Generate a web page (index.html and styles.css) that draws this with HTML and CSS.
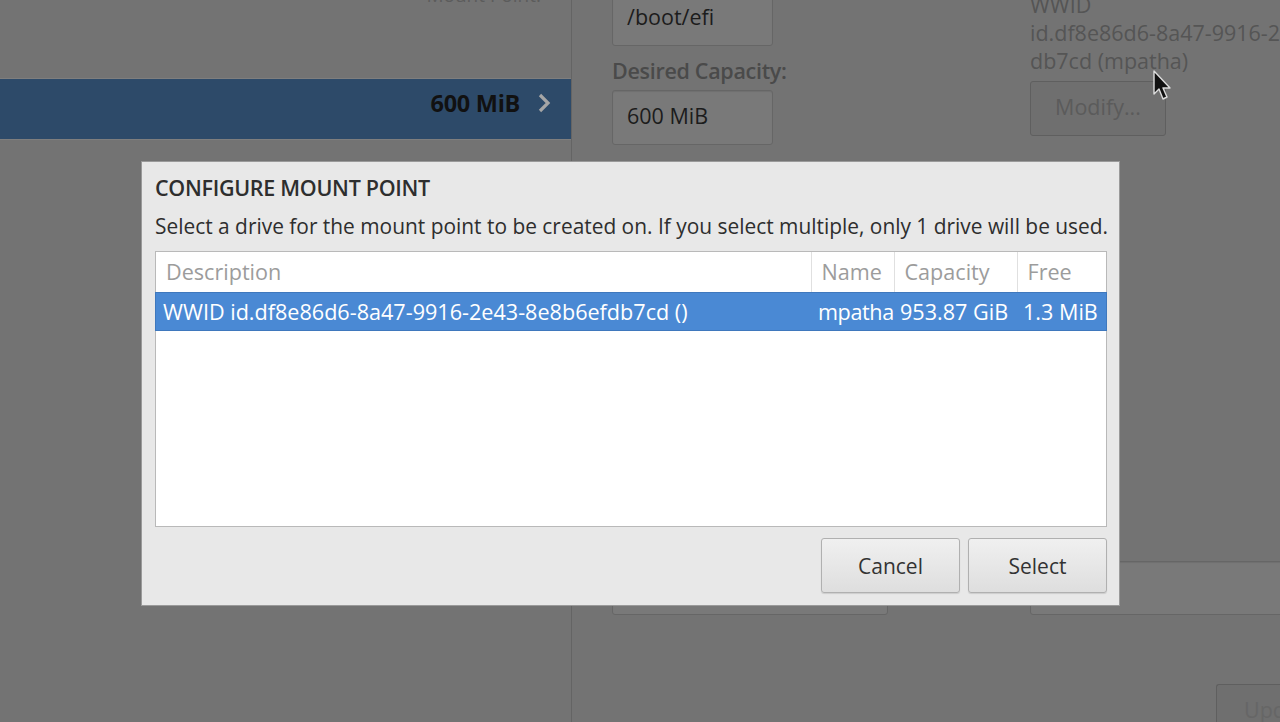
FILE: index.html
```html
<!DOCTYPE html>
<html lang="en">
<head>
<meta charset="utf-8">
<title>Configure Mount Point</title>
<link rel="stylesheet" href="styles.css">
</head>
<body>
<div class="app">
  <div class="left">
    <div class="top-cut">Mount Point:</div>
    <div class="part-row selected">
      <span class="size">600 MiB</span>
      <svg class="chev" width="14" height="22" viewBox="0 0 14 22"><path d="M3 3 L11 11 L3 19" fill="none" stroke="#a6a6a6" stroke-width="3.2"/></svg>
    </div>
  </div>
  <div class="right">
    <div class="cols">
      <div class="col1">
        <div class="field first">/boot/efi</div>
        <div class="label">Desired Capacity:</div>
        <div class="field">600 MiB</div>
      </div>
      <div class="col2">
        <div class="dev">WWID<br>id.df8e86d6-8a47-9916-2e43-8e8b6efdb7cd<br>db7cd (mpatha)</div>
        <div class="btn-dim">Modify...</div>
      </div>
    </div>
    <div class="bottom-fields">
      <div class="field wide"></div>
      <div class="field wide2"></div>
    </div>
    <div class="update-row"><div class="btn-dim upd">Update Settings</div></div>
  </div>
</div>

<svg class="cursor" width="22" height="32" viewBox="0 0 22 32"><path d="M1 1 L1 24 L6 19 L10 29 L14 27 L10 18 L17 18 Z" fill="#111" stroke="#ddd" stroke-width="1.4" stroke-linejoin="round"/></svg>

<div class="dialog">
  <div class="title">CONFIGURE MOUNT POINT</div>
  <div class="subtitle">Select a drive for the mount point to be created on. If you select multiple, only 1 drive will be used.</div>
  <div class="table-wrap">
    <table class="drives">
      <colgroup>
        <col class="c-desc"><col class="c-name"><col class="c-cap"><col class="c-free">
      </colgroup>
      <thead>
        <tr><th>Description</th><th>Name</th><th>Capacity</th><th class="last">Free</th></tr>
      </thead>
      <tbody>
        <tr class="sel"><td>WWID id.df8e86d6-8a47-9916-2e43-8e8b6efdb7cd ()</td><td>mpatha</td><td>953.87 GiB</td><td>1.3 MiB</td></tr>
      </tbody>
    </table>
  </div>
  <div class="actions">
    <button class="btn">Cancel</button>
    <button class="btn">Select</button>
  </div>
</div>
</body>
</html>
```

FILE: styles.css
```css
* { box-sizing: border-box; }
html, body {
  margin: 0;
  padding: 0;
  width: 1280px;
  height: 722px;
  overflow: hidden;
  background: #737373;
  font-family: "Open Sans", "Noto Sans", sans-serif;
}
.app {
  display: flex;
  height: 722px;
}
.left {
  width: 572px;
  flex: none;
  border-right: 1px solid #646464;
  display: flex;
  flex-direction: column;
}
.top-cut {
  height: 92px;
  margin-top: -14px;
  text-align: right;
  padding-right: 30px;
  color: #5c5c5c;
  font-size: 19px;
  line-height: 18px;
}
.part-row {
  height: 62px;
  border-top: 1px solid #7e7e7e;
  border-bottom: 1px solid #7e7e7e;
  display: flex;
  align-items: center;
  justify-content: flex-end;
  padding-right: 20px;
  padding-bottom: 12px;
  gap: 17px;
}
.part-row.selected { background: #2d4a69; }
.size {
  color: #111;
  font-size: 23.5px;
  font-weight: 700;
  letter-spacing: -0.3px;
}
.chev { display: block; }

.right {
  flex: 1;
  min-width: 0;
  display: flex;
  flex-direction: column;
  padding-left: 40px;
}
.cols {
  display: flex;
}
.col1 { width: 418px; flex: none; }
.col2 { flex: 1; min-width: 0; }
.field {
  width: 161px;
  height: 55px;
  background: #797979;
  border: 1px solid #666;
  border-radius: 3px;
  box-shadow: inset 0 1px 1px rgba(0,0,0,0.08);
  color: #1c1c1c;
  font-size: 21.5px;
  line-height: 50px;
  padding-left: 14px;
}
.field.first {
  margin-top: -9px;
}
.label {
  margin-top: 12px;
  height: 26px;
  line-height: 26px;
  font-size: 21.5px;
  font-weight: 600;
  color: #4a4a4a;
  letter-spacing: -0.3px;
}
.col1 .label + .field { margin-top: 6px; }
.dev {
  margin-top: -9px;
  color: #555;
  font-size: 21.5px;
  line-height: 28px;
  white-space: nowrap;
  overflow: hidden;
}
.btn-dim {
  margin-top: 6px;
  width: 136px;
  height: 55px;
  border: 1px solid #5f5f5f;
  border-radius: 3px;
  background: #6f6f6f;
  color: #5b5b5b;
  font-size: 21.5px;
  line-height: 50px;
  text-align: center;
}
.bottom-fields {
  display: flex;
  margin-top: 416px;
}
.field.wide { width: 276px; height: 54px; flex: none; }
.field.wide2 { width: 260px; height: 54px; margin-left: 142px; flex: none; }
.update-row {
  display: flex;
  justify-content: flex-end;
  margin-top: 69px;
}
.btn-dim.upd {
  margin-top: 0;
  width: 64px;
  overflow: hidden;
  white-space: nowrap;
  text-align: left;
  padding-left: 27px;
  border-right: none;
  border-radius: 3px 0 0 3px;
  color: #666;
}

.cursor {
  position: absolute;
  left: 1153px;
  top: 70px;
}

.dialog {
  position: absolute;
  left: 141px;
  top: 161px;
  width: 979px;
  height: 445px;
  background: #e8e8e8;
  border: 1px solid #9a9a9a;
  padding: 12px 12px 12px 13px;
  display: flex;
  flex-direction: column;
}
.title {
  height: 28px;
  line-height: 28px;
  font-size: 21.5px;
  font-weight: 600;
  color: #2e2e2e;
  letter-spacing: -0.3px;
}
.subtitle {
  margin-top: 10px;
  height: 28px;
  line-height: 28px;
  font-size: 20.9px;
  color: #2e2e2e;
  white-space: nowrap;
}
.table-wrap {
  margin-top: 11px;
  height: 276px;
  background: #fff;
  border: 1px solid #b9b9b9;
}
.drives {
  width: 100%;
  border-collapse: collapse;
  table-layout: fixed;
  font-size: 21.6px;
}
.c-desc { width: 655px; }
.c-name { width: 83px; }
.c-cap { width: 123px; }
.c-free { width: auto; }
.drives th {
  height: 41px;
  text-align: left;
  font-weight: 400;
  color: #9c9c9c;
  padding: 0 0 3px 10px;
  border-right: 1px solid #e0e0e0;
  white-space: nowrap;
  overflow: hidden;
}
.drives th.last { border-right: none; }
.drives td {
  height: 37px;
  padding: 0 0 0 6px;
  white-space: nowrap;
  overflow: hidden;
  color: #fff;
}
.drives tr.sel { background: #4a89d4; outline: 1px solid #3f78bd; }
.drives tr.sel td:first-child { padding-left: 7px; }
.drives tr.sel td:nth-child(2) { padding-left: 7px; letter-spacing: -0.4px; }
.actions {
  margin-top: 11px;
  display: flex;
  justify-content: flex-end;
  gap: 8px;
}
.btn {
  width: 139px;
  height: 55px;
  border: 1px solid #b0b0b0;
  border-radius: 3px;
  background: linear-gradient(#f0f0f0, #dedede);
  box-shadow: 0 1px 1px rgba(0,0,0,0.12);
  font-family: "Open Sans", "Noto Sans", sans-serif;
  font-size: 21px;
  color: #333;
  padding: 0;
}
```
